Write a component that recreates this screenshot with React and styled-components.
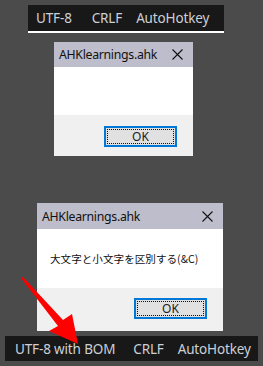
import styled, { createGlobalStyle } from "styled-components";

const GlobalStyle = createGlobalStyle`
html, body {
    margin: 0;
    padding: 0;
    background: #4b4b4b;
}
`;

const Page = styled.div`
position: relative;
width: 263px;
height: 366px;
display: flex;
flex-direction: column;
font-family: "Noto Sans", "Liberation Sans", sans-serif;
overflow: hidden;
`;

const StatusBar = styled.div`
display: flex;
align-items: center;
height: ${({ $h }) => $h}px;
margin-left: ${({ $left }) => $left}px;
margin-top: ${({ $top }) => $top}px;
width: ${({ $w }) => $w}px;
padding-left: ${({ $pad }) => $pad}px;
box-sizing: border-box;
background: #181818;
border-bottom: ${({ $line }) => ($line ? "2px solid #ffffff" : "none")};
`;

const StatusItem = styled.span`
color: #ccd0d6;
font-size: 13.5px;
letter-spacing: -0.15px;
white-space: nowrap;
margin-right: ${({ $gap }) => $gap}px;
`;

const Dialog = styled.div`
display: flex;
flex-direction: column;
margin-left: ${({ $left }) => $left}px;
margin-top: ${({ $top }) => $top}px;
width: ${({ $w }) => $w}px;
background: #f0f0f0;
`;

const TitleBar = styled.div`
display: flex;
align-items: center;
justify-content: space-between;
height: ${({ $h }) => $h}px;
padding: 0 10px 0 5px;
background: #bdbdcb;
`;

const Title = styled.span`
font-size: 12.3px;
letter-spacing: -0.3px;
color: #111;
`;

const CloseIcon = styled.svg`
width: 11px;
height: 11px;
`;

const Body = styled.div`
height: ${({ $h }) => $h}px;
background: #ffffff;
display: flex;
align-items: center;
padding-left: 13px;
`;

const Message = styled.span`
font-family: "Noto Sans CJK JP", "Noto Sans", sans-serif;
font-size: 10.6px;
color: #111;
`;

const Footer = styled.div`
height: ${({ $h }) => $h}px;
display: flex;
justify-content: flex-end;
padding: ${({ $pt }) => $pt}px 16px 0 0;
box-sizing: border-box;
background-color: #f0f0f0;
background-image: radial-gradient(#e6e3e6 0.6px, transparent 0.7px);
background-size: 6px 6px;
`;

const OkButton = styled.div`
position: relative;
width: 73px;
height: 21px;
box-sizing: border-box;
border: 2px solid #0078d7;
background: #e1e1e1;
display: flex;
align-items: center;
justify-content: center;
font-size: 12px;
color: #222;

&::after {
    content: "";
    position: absolute;
    inset: 1px;
    border: 1px dotted #111;
}
`;

const Arrow = styled.svg`
position: absolute;
left: 0;
top: 0;
width: 263px;
height: 366px;
pointer-events: none;
`;

const Close = () => (
    <CloseIcon viewBox="0 0 11 11">
        <path d="M0.5 0.5 L10.5 10.5 M10.5 0.5 L0.5 10.5" stroke="#111" strokeWidth="1.1" fill="none" />
    </CloseIcon>
);

const MsgBox = ({ left, top, w, titleH, bodyH, footH, footPad, text }) => (
    <Dialog $left={left} $top={top} $w={w}>
        <TitleBar $h={titleH}>
            <Title>AHKlearnings.ahk</Title>
            <Close />
        </TitleBar>
        <Body $h={bodyH}>{text && <Message>{text}</Message>}</Body>
        <Footer $h={footH} $pt={footPad}>
            <OkButton>OK</OkButton>
        </Footer>
    </Dialog>
);

export default function App() {
    return (
        <>
            <GlobalStyle />
            <Page>
                <StatusBar $h={28} $left={28} $top={5} $w={196} $pad={8} $line>
                    <StatusItem $gap={20}>UTF-8</StatusItem>
                    <StatusItem $gap={14}>CRLF</StatusItem>
                    <StatusItem>AutoHotkey</StatusItem>
                </StatusBar>

                <MsgBox left={54} top={9} w={139} titleH={25} bodyH={48} footH={41} footPad={11} />

                <MsgBox
                    left={37}
                    top={47}
                    w={186}
                    titleH={26}
                    bodyH={59}
                    footH={43}
                    footPad={10}
                    text="大文字と小文字を区別する(&C)"
                />

                <StatusBar $h={25} $left={5} $top={5} $w={253} $pad={10}>
                    <StatusItem $gap={18}>UTF-8 with BOM</StatusItem>
                    <StatusItem $gap={14}>CRLF</StatusItem>
                    <StatusItem>AutoHotkey</StatusItem>
                </StatusBar>

                <Arrow viewBox="0 0 263 366">
                    <polygon
                        points="21,278 23,277 63,320 72,314 78,344 49,331 58,326"
                        fill="#ff0000"
                    />
                </Arrow>
            </Page>
        </>
    );
}
